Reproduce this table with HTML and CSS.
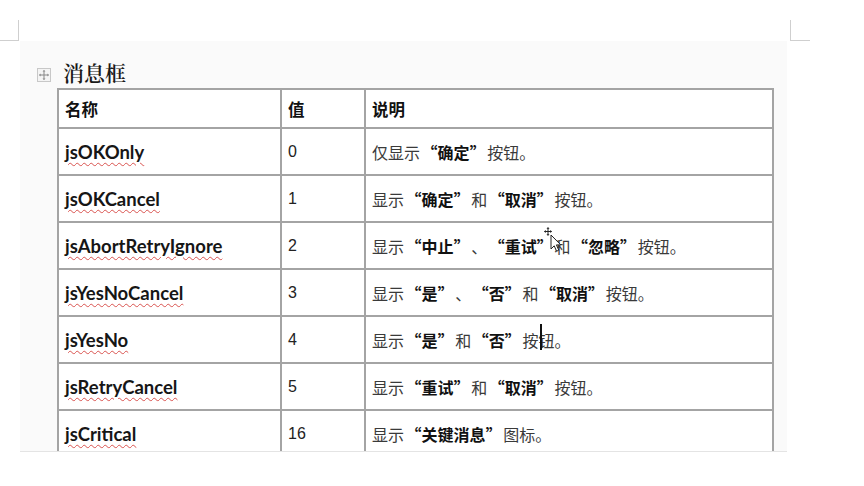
FILE: index.html
```html
<!DOCTYPE html>
<html lang="zh-CN">
<head>
<meta charset="utf-8">
<link rel="stylesheet" href="styles.css">
</head>
<body>
<div class="mark mark-tl"></div>
<div class="mark mark-tr"></div>
<div class="page">
  <div class="title-row">
    <span class="handle">
      <svg width="14" height="14" viewBox="0 0 14 14"><rect x="0.5" y="0.5" width="13" height="13" fill="#f4f4f4" stroke="#c8c8c8"/><path d="M7 2.5v9M2.5 7h9" stroke="#888" stroke-width="1"/><path d="M7 2l-1.5 1.6h3zM7 12l-1.5-1.6h3zM2 7l1.6-1.5v3zM12 7l-1.6-1.5v3z" fill="#888"/></svg>
    </span>
    <h1 class="title">消息框</h1>
  </div>
  <table class="grid">
    <colgroup><col class="c1"><col class="c2"><col class="c3"></colgroup>
    <thead>
      <tr class="head"><th>名称</th><th>值</th><th>说明</th></tr>
    </thead>
    <tbody>
      <tr><td class="name"><span>jsOKOnly</span></td><td class="val">0</td><td class="desc">仅显示<b><i class="qo">“</i>确定<i class="qc">”</i></b>按钮。</td></tr>
      <tr><td class="name"><span>jsOKCancel</span></td><td class="val">1</td><td class="desc">显示<b><i class="qo">“</i>确定<i class="qc">”</i></b>和<b><i class="qo">“</i>取消<i class="qc">”</i></b>按钮。</td></tr>
      <tr><td class="name"><span>jsAbortRetryIgnore</span></td><td class="val">2</td><td class="desc">显示<b><i class="qo">“</i>中止<i class="qc">”</i></b>、<b><i class="qo">“</i>重试<i class="qc">”</i></b>和<b><i class="qo">“</i>忽略<i class="qc">”</i></b>按钮。</td></tr>
      <tr><td class="name"><span>jsYesNoCancel</span></td><td class="val">3</td><td class="desc">显示<b><i class="qo">“</i>是<i class="qc">”</i></b>、<b><i class="qo">“</i>否<i class="qc">”</i></b>和<b><i class="qo">“</i>取消<i class="qc">”</i></b>按钮。</td></tr>
      <tr><td class="name"><span>jsYesNo</span></td><td class="val">4</td><td class="desc">显示<b><i class="qo">“</i>是<i class="qc">”</i></b>和<b><i class="qo">“</i>否<i class="qc">”</i></b>按钮。</td></tr>
      <tr><td class="name"><span>jsRetryCancel</span></td><td class="val">5</td><td class="desc">显示<b><i class="qo">“</i>重试<i class="qc">”</i></b>和<b><i class="qo">“</i>取消<i class="qc">”</i></b>按钮。</td></tr>
      <tr><td class="name"><span>jsCritical</span></td><td class="val">16</td><td class="desc">显示<b><i class="qo">“</i>关键消息<i class="qc">”</i></b>图标。</td></tr>
    </tbody>
  </table>
</div>
<svg class="cursor-move" width="18" height="26" viewBox="0 0 18 26"><path d="M5 1v7M1.5 4.5h7" stroke="#222" stroke-width="1"/><path d="M5 0l-1.5 1.8h3zM5 9l-1.5-1.8h3zM1 4.5l1.8-1.5v3zM9 4.5l-1.8-1.5v3z" fill="#222"/><path d="M8 8v14l3.2-3.2 2.4 5.4 2.2-1-2.4-5.3h4.4z" fill="#fff" stroke="#222" stroke-width="1"/></svg>
<div class="ibeam"></div>
</body>
</html>
```

FILE: styles.css
```css
html, body {
  margin: 0;
  padding: 0;
  background: #ffffff;
}
body {
  width: 864px;
  height: 486px;
  overflow: hidden;
  position: relative;
  font-family: "Noto Sans CJK SC", "Noto Sans", sans-serif;
}
.mark {
  position: absolute;
  width: 18px;
  height: 20px;
}
.mark-tl {
  left: 0;
  top: 20px;
  border-right: 1px solid #cfcfcf;
  border-bottom: 1px solid #cfcfcf;
}
.mark-tr {
  left: 790px;
  top: 20px;
  width: 19px;
  border-left: 1px solid #cfcfcf;
  border-bottom: 1px solid #cfcfcf;
}
.page {
  margin: 41px 0 0 20px;
  width: 767px;
  height: 411px;
  background: #fafafa;
  border-bottom: 1px solid #e4e4e4;
  overflow: hidden;
  padding: 17px 0 0 17px;
  box-sizing: border-box;
}
.title-row {
  display: flex;
  align-items: center;
  height: 28px;
}
.handle {
  display: flex;
  width: 14px;
  height: 14px;
  margin-top: 6px;
}
.title {
  margin: 0 0 0 12px;
  font-family: "Noto Serif CJK SC", "Noto Sans CJK SC", serif;
  font-weight: 600;
  font-size: 21px;
  line-height: 28px;
  color: #1a1a1a;
}
.grid {
  margin: 2px 0 0 20px;
  border-collapse: collapse;
  table-layout: fixed;
  width: 717px;
  background: #ffffff;
}
.c1 { width: 223px; }
.c2 { width: 84px; }
.c3 { width: 408px; }
.grid th, .grid td {
  border: 2px solid #a4a4a4;
  padding: 0 6px;
  text-align: left;
  vertical-align: middle;
  height: 47px;
  box-sizing: border-box;
}
.grid .head th {
  height: 39px;
  font-weight: 700;
  font-size: 16.5px;
  color: #111;
}
.name span {
  font-family: "Lato", "Open Sans", sans-serif;
  font-weight: 700;
  font-size: 18.5px;
  color: #161616;
  text-decoration-line: underline;
  text-decoration-style: wavy;
  text-decoration-color: #d9534f;
  text-decoration-thickness: 1px;
  text-underline-offset: 3px;
}
.val {
  font-family: "Liberation Sans", "Noto Sans", sans-serif;
  font-size: 16px;
  color: #222;
  padding-left: 8px;
}
.desc {
  font-size: 16px;
  color: #3a3a3a;
  white-space: nowrap;
}
.desc b {
  font-weight: 700;
  color: #111;
}
.qo, .qc {
  display: inline-block;
  width: 1.1em;
  font-style: normal;
}
.qo { text-align: right; }
.qc { text-align: left; }
.cursor-move {
  position: absolute;
  left: 543px;
  top: 227px;
}
.ibeam {
  position: absolute;
  left: 540px;
  top: 324px;
  width: 2px;
  height: 26px;
  background: #111;
}
```
